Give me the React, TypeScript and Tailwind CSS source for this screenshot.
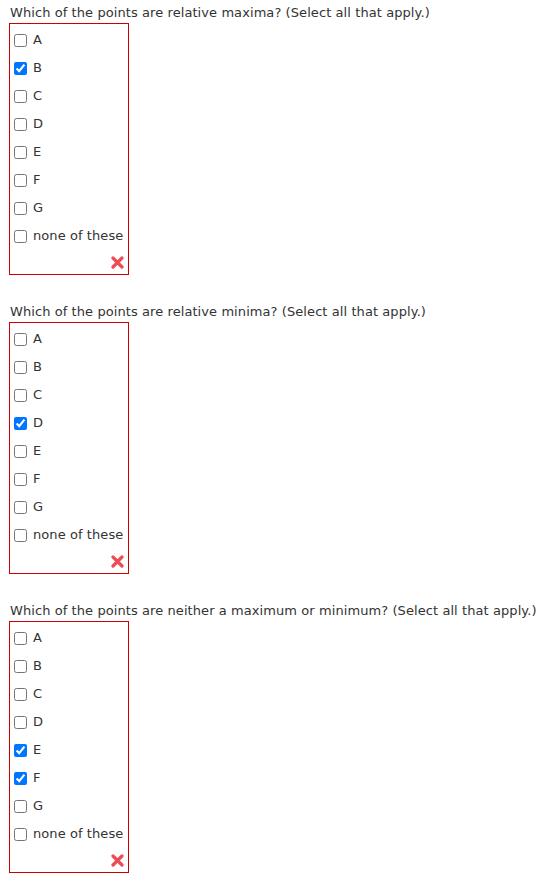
import React from 'react';

const options = ['A', 'B', 'C', 'D', 'E', 'F', 'G', 'none of these'];

const questions = [
    { text: 'Which of the points are relative maxima? (Select all that apply.)', checked: ['B'] },
    { text: 'Which of the points are relative minima? (Select all that apply.)', checked: ['D'] },
    { text: 'Which of the points are neither a maximum or minimum? (Select all that apply.)', checked: ['E', 'F'] },
];

const WrongMark = () => (
    <svg width="13" height="13" viewBox="0 0 13 13">
        <path d="M2 2 L11 11 M11 2 L2 11" stroke="#ef4b55" strokeWidth="3.2" strokeLinecap="round" />
    </svg>
);

export default function App() {
    return (
        <div className="pl-[9px] text-[13px] text-[#333333] tracking-[0.08px]" style={{ fontFamily: '"DejaVu Sans", Verdana, sans-serif' }}>
            {questions.map((q, qi) => (
                <div key={qi} className={qi === 0 ? 'pt-[5px]' : 'pt-[29px]'}>
                    {/* Question */}
                    <p className="leading-[16px] pl-[1px] mb-[2px]">{q.text}</p>

                    {/* Answer box */}
                    <div className="w-[120px] border border-[#cc0000] pt-[2px]">
                        {options.map((opt) => (
                            <label key={opt} className="flex items-center h-[28px]">
                                <input
                                    type="checkbox"
                                    defaultChecked={q.checked.includes(opt)}
                                    className="w-[13px] h-[13px] m-0 ml-[4px]"
                                />
                                <span className="ml-[6px] leading-[16px]">{opt}</span>
                            </label>
                        ))}
                        <div className="h-[24px] flex items-center justify-end pr-[4px]">
                            <WrongMark />
                        </div>
                    </div>
                </div>
            ))}
        </div>
    );
}
